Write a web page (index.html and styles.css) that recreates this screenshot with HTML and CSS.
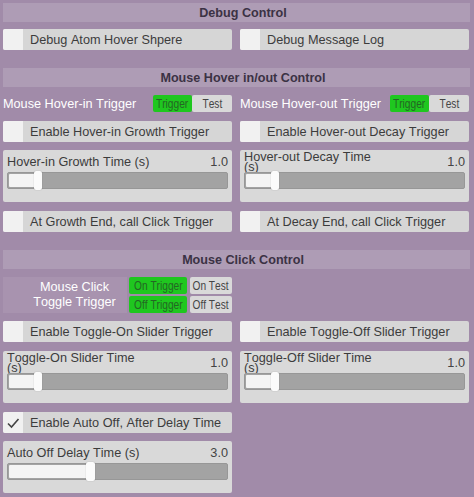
FILE: index.html
```html
<!DOCTYPE html>
<html>
<head>
<meta charset="utf-8">
<link rel="stylesheet" href="styles.css">
</head>
<body>
<div class="page">
  <div class="head">Debug Control</div>
  <div class="cols mt7">
    <div class="toggle"><div class="box"></div><div class="tlabel">Debug Atom Hover Shpere</div></div>
    <div class="toggle"><div class="box"></div><div class="tlabel">Debug Message Log</div></div>
  </div>

  <div class="head mt18">Mouse Hover in/out Control</div>
  <div class="cols mt8">
    <div class="trig"><div class="tname">Mouse Hover-in Trigger</div><div class="btn on"><span>Trigger</span></div><div class="btn"><span>Test</span></div></div>
    <div class="trig"><div class="tname">Mouse Hover-out Trigger</div><div class="btn on"><span>Trigger</span></div><div class="btn"><span>Test</span></div></div>
  </div>
  <div class="cols mt9">
    <div class="toggle"><div class="box"></div><div class="tlabel">Enable Hover-in Growth Trigger</div></div>
    <div class="toggle"><div class="box"></div><div class="tlabel">Enable Hover-out Decay Trigger</div></div>
  </div>
  <div class="cols mt8">
    <div class="slider">
      <div class="stop"><div class="slbl">Hover-in Growth Time (s)</div><div class="sval">1.0</div></div>
      <div class="track"><div class="fill" style="width:13.6%"></div><div class="knob" style="left:13.6%"></div></div>
    </div>
    <div class="slider">
      <div class="stop"><div class="slbl">Hover-out Decay Time (s)</div><div class="sval">1.0</div></div>
      <div class="track"><div class="fill" style="width:13.6%"></div><div class="knob" style="left:13.6%"></div></div>
    </div>
  </div>
  <div class="cols mt9">
    <div class="toggle"><div class="box"></div><div class="tlabel">At Growth End, call Click Trigger</div></div>
    <div class="toggle"><div class="box"></div><div class="tlabel">At Decay End, call Click Trigger</div></div>
  </div>

  <div class="head mt18">Mouse Click Control</div>
  <div class="cols mt8">
    <div class="click">
      <div class="clbl"><div>Mouse Click</div><div>Toggle Trigger</div></div>
      <div class="cbtns">
        <div class="btn on wide"><span>On Trigger</span></div>
        <div class="btn narrow"><span>On Test</span></div>
        <div class="btn on wide"><span>Off Trigger</span></div>
        <div class="btn narrow"><span>Off Test</span></div>
      </div>
    </div>
    <div></div>
  </div>
  <div class="cols mt8">
    <div class="toggle"><div class="box"></div><div class="tlabel">Enable Toggle-On Slider Trigger</div></div>
    <div class="toggle"><div class="box"></div><div class="tlabel">Enable Toggle-Off Slider Trigger</div></div>
  </div>
  <div class="cols mt9">
    <div class="slider">
      <div class="stop"><div class="slbl">Toggle-On Slider Time (s)</div><div class="sval">1.0</div></div>
      <div class="track"><div class="fill" style="width:13.6%"></div><div class="knob" style="left:13.6%"></div></div>
    </div>
    <div class="slider">
      <div class="stop"><div class="slbl">Toggle-Off Slider Time (s)</div><div class="sval">1.0</div></div>
      <div class="track"><div class="fill" style="width:13.6%"></div><div class="knob" style="left:13.6%"></div></div>
    </div>
  </div>
  <div class="cols mt9">
    <div class="toggle"><div class="box"><svg width="14" height="14" viewBox="0 0 14 14"><polyline points="2,7.5 5.5,11 12.5,3" fill="none" stroke="#444" stroke-width="1.6"/></svg></div><div class="tlabel">Enable Auto Off, After Delay Time</div></div>
    <div></div>
  </div>
  <div class="cols mt8">
    <div class="slider">
      <div class="stop"><div class="slbl">Auto Off Delay Time (s)</div><div class="sval">3.0</div></div>
      <div class="track"><div class="fill" style="width:37.6%"></div><div class="knob wide" style="left:37.6%"></div></div>
    </div>
    <div></div>
  </div>
</div>
</body>
</html>
```

FILE: styles.css
```css
html, body {
  margin: 0;
  padding: 0;
}
body {
  background: #a18ba9;
  font-family: "Liberation Sans", Arial, sans-serif;
  font-size: 12.7px;
  font-kerning: none;
  color: #3c3c3c;
  width: 474px;
  height: 497px;
  overflow: hidden;
}
.page {
  padding: 3px 0 0 3px;
  display: flex;
  flex-direction: column;
  width: 467px;
}
.mt7 { margin-top: 7px; }
.mt8 { margin-top: 8px; }
.mt9 { margin-top: 9px; }
.mt18 { margin-top: 18px; }

.head {
  height: 19px;
  line-height: 20px;
  background: #ae9cb5;
  color: #3b3244;
  font-weight: bold;
  font-size: 12.6px;
  text-align: center;
  padding-left: 13px;
  width: 467px;
  box-sizing: border-box;
}
.cols {
  display: grid;
  grid-template-columns: 229px 229px;
  column-gap: 8px;
}
.toggle {
  display: flex;
  height: 21px;
  background: #d6d6d6;
  border-radius: 2px;
  overflow: hidden;
}
.box {
  width: 20px;
  flex: none;
  background: #f1f1f1;
  display: flex;
  align-items: center;
  justify-content: center;
}
.tlabel {
  padding-left: 7px;
  line-height: 22px;
  white-space: nowrap;
}
.trig {
  display: flex;
  align-items: center;
  height: 17px;
}
.tname {
  flex: 1;
  color: #fff;
  white-space: nowrap;
}
.btn {
  width: 40px;
  height: 17px;
  flex: none;
  background: #d9d9d9;
  color: #454545;
  border-radius: 2px;
  display: flex;
  align-items: center;
  justify-content: center;
  overflow: hidden;
  white-space: nowrap;
}
.trig .btn.on { width: 39px; }
.btn span {
  display: inline-block;
  transform: scaleX(0.8);
}
.btn.on {
  background: #1fc71f;
  color: #246624;
}
.slider {
  height: 52px;
  background: #d9d9d9;
  border-radius: 2px;
  padding: 0 4px;
  box-sizing: border-box;
}
.stop {
  height: 22px;
  display: flex;
  align-items: center;
  justify-content: space-between;
  padding-top: 1px;
  box-sizing: border-box;
}
.slbl {
  width: 144px;
  line-height: 10px;
}
.sval {
  color: #444;
}
.track {
  position: relative;
  height: 17px;
  background: #a3a3a3;
  border: 1px solid #979797;
  border-radius: 2px;
  box-sizing: border-box;
}
.fill {
  position: absolute;
  left: 1px;
  top: 1px;
  bottom: 1px;
  background: #f4f4f4;
  border-radius: 1px;
}
.knob {
  position: absolute;
  top: -2px;
  bottom: -2px;
  width: 8px;
  margin-left: -4px;
  background: #fbfbfb;
  border-radius: 2px;
  box-shadow: 0 0 1px rgba(0, 0, 0, 0.35);
}
.knob.wide {
  width: 9px;
}
.click {
  display: flex;
  height: 36px;
}
.clbl {
  width: 125px;
  box-sizing: border-box;
  padding-left: 19px;
  background: #a893af;
  color: #fff;
  text-align: center;
  line-height: 15px;
  display: flex;
  flex-direction: column;
  justify-content: center;
}
.cbtns {
  margin-left: 2px;
  display: grid;
  grid-template-columns: 58px 42px;
  grid-template-rows: 17px 17px;
  column-gap: 3px;
  row-gap: 2px;
}
.cbtns .btn {
  width: auto;
}
```
